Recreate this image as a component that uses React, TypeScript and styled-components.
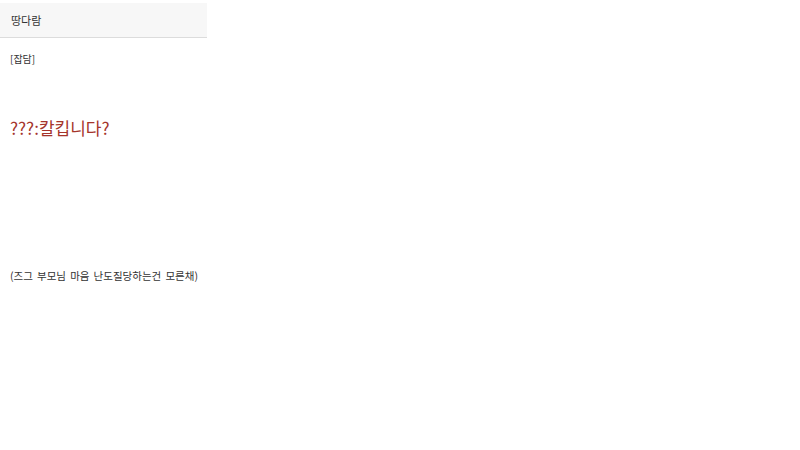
import React from 'react'
import styled, { createGlobalStyle } from 'styled-components'

const GlobalStyle = createGlobalStyle`
  html, body {
    margin: 0;
    padding: 0;
    background: #fff;
  }
  body {
    font-family: "Noto Sans CJK KR", "Noto Sans", sans-serif;
    color: #222;
  }
`

const App = () => {
  return (
    <>
      <GlobalStyle />
      <Page>
        <Panel>
          <Header>땅다람</Header>
          <Body>
            <Tag>[잡담]</Tag>
            <Quote>???:칼킵니다?</Quote>
            <Note>(즈그 부모님 마음 난도질당하는건 모른채)</Note>
          </Body>
        </Panel>
      </Page>
    </>
  )
}

export default App

const Page = styled.div`
  padding-top: 3px;
`

const Panel = styled.div`
  width: 207px;
`

const Header = styled.div`
  height: 34px;
  display: flex;
  align-items: center;
  padding-left: 11px;
  background-color: #f7f7f7;
  border-bottom: 1px solid #dcdcdc;
  font-size: 11px;
  color: #333;
`

const Body = styled.div`
  padding: 14px 6px 0 10px;
  display: flex;
  flex-direction: column;
`

const Tag = styled.div`
  font-size: 10px;
  line-height: 14px;
  color: #333;
`

const Quote = styled.div`
  margin-top: 50px;
  font-size: 17px;
  line-height: 24px;
  color: #a5342b;
`

const Note = styled.div`
  margin-top: 128px;
  font-size: 10.5px;
  line-height: 16px;
  word-spacing: 1.8px;
  white-space: nowrap;
  color: #333;
`
